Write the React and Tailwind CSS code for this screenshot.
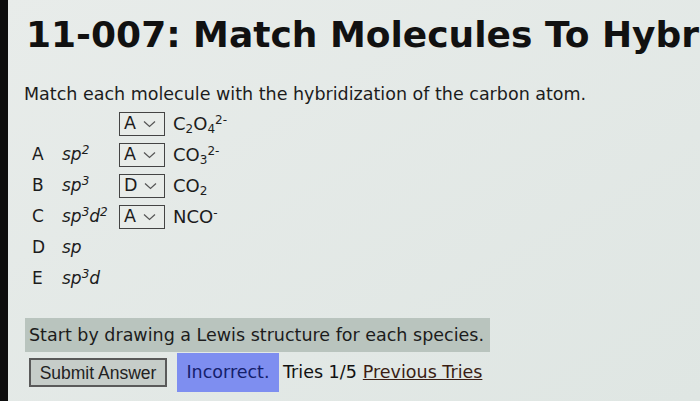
import React from 'react';

const Sub = ({ children }) => <sub className="text-[12px]">{children}</sub>;
const Sup = ({ children }) => <sup className="text-[12px]">{children}</sup>;

const rows = [
  { letter: '', label: null, pick: 'A', mol: <>C<Sub>2</Sub>O<Sub>4</Sub><Sup>2-</Sup></> },
  { letter: 'A', label: <>sp<Sup>2</Sup></>, pick: 'A', mol: <>CO<Sub>3</Sub><Sup>2-</Sup></> },
  { letter: 'B', label: <>sp<Sup>3</Sup></>, pick: 'D', mol: <>CO<Sub>2</Sub></> },
  { letter: 'C', label: <>sp<Sup>3</Sup>d<Sup>2</Sup></>, pick: 'A', mol: <>NCO<Sup>-</Sup></> },
  { letter: 'D', label: <>sp</> },
  { letter: 'E', label: <>sp<Sup>3</Sup>d</> },
];

const Chevron = () => (
  <svg width="13" height="8" viewBox="0 0 13 8" className="ml-[7px]">
    <path d="M1 1.5 L6.5 6.5 L12 1.5" fill="none" stroke="#555" strokeWidth="1.2" />
  </svg>
);

const App = () => {
  return (
    <div className="w-[700px] h-[401px] overflow-hidden flex bg-gradient-to-br from-[#e8ecea] to-[#dfe6e3] text-[#1c1c1c]" style={{ fontFamily: '"DejaVu Sans", Verdana, sans-serif' }}>
      <div className="w-[8px] shrink-0 bg-[#0d0d0d]" />
      <div className="flex-1 min-w-0 pl-[18px] pt-[13px] overflow-hidden">
        <h1 className="text-[36px] font-bold whitespace-nowrap leading-[44px] text-[#111]">
          11-007: Match Molecules To Hybri
        </h1>

        <p className="mt-[26px] text-[17.5px] leading-[22px] ml-[-2px]">
          Match each molecule with the hybridization of the carbon atom.
        </p>

        <div className="mt-[3px] flex flex-col">
          {rows.map((r, i) => (
            <div key={i} className="flex items-center h-[31px]">
              <span className="w-[36px] pl-[6px] text-[17px]">{r.letter}</span>
              <span className="w-[57px] text-[17px] italic whitespace-nowrap">{r.label}</span>
              {r.pick && (
                <>
                  <div className="flex items-center h-[24px] w-[46px] border border-[#444] bg-[#e8ece9] pl-[4px] text-[17.5px]">
                    {r.pick}
                    <Chevron />
                  </div>
                  <span className="ml-[8px] text-[18px] leading-none">{r.mol}</span>
                </>
              )}
            </div>
          ))}
        </div>

        <div className="mt-[24px] w-[465px] h-[34px] flex items-center pl-[4px] bg-[#b9c4be] text-[17.5px] ml-[-1px]">
          Start by drawing a Lewis structure for each species.
        </div>

        <div className="flex items-center h-[39px] mt-[1px]">
          <button className="ml-[3px] h-[29px] w-[138px] border-2 border-[#5a5a5a] bg-[#c6cdc9] text-[17.5px] text-[#222]" style={{ fontFamily: '"Liberation Sans", Arial, sans-serif' }}>
            Submit Answer
          </button>
          <div className="ml-[10px] h-[39px] w-[102px] flex items-center justify-center bg-[#7e8ef0] text-[#14206b] text-[17.5px]">
            Incorrect.
          </div>
          <span className="ml-[4px] text-[17.5px] text-[#111]">Tries 1/5</span>
          <span className="ml-[6px] text-[17.5px] underline text-[#3a1e14]">Previous Tries</span>
        </div>
      </div>
    </div>
  );
};

export default App;
